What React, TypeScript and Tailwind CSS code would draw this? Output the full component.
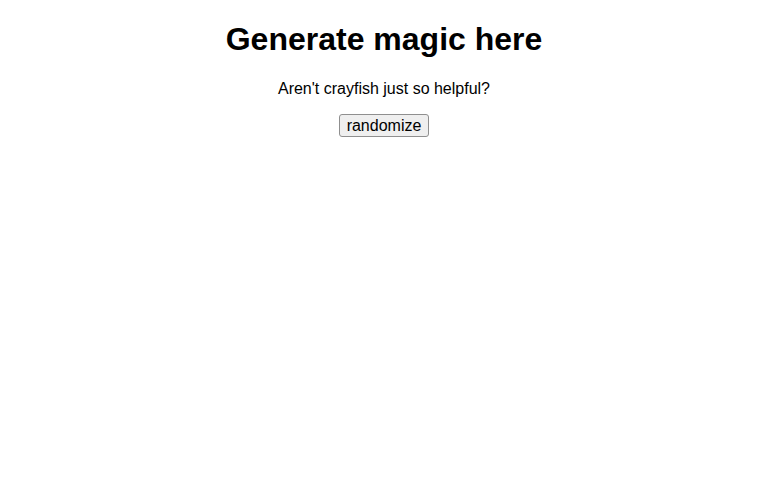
import React, { useState } from 'react';

const lines = [
  "Aren't crayfish just so helpful?",
  'Crayfish walk backwards when they are scared.',
  'Nobody has ever regretted a crayfish.',
  'Crayfish: the lobsters of the creek.',
];

export default function App() {
  const [index, setIndex] = useState(0);

  const randomize = () => {
    setIndex(Math.floor(Math.random() * lines.length));
  };

  return (
    <div className="min-h-screen bg-white text-center text-black font-['Liberation_Sans',Arial,sans-serif]">
      <h1 className="pt-[21px] text-[32px] leading-[37px] font-bold">Generate magic here</h1>
      <p className="mt-[22px] text-base leading-[18px]">{lines[index]}</p>
      <button
        onClick={randomize}
        className="mt-[16px] h-[23px] px-[7px] text-base leading-[18px] bg-[#efefef] border border-[#8f8f8f] rounded-[3px] hover:bg-[#e5e5e5]"
      >
        randomize
      </button>
    </div>
  );
}
